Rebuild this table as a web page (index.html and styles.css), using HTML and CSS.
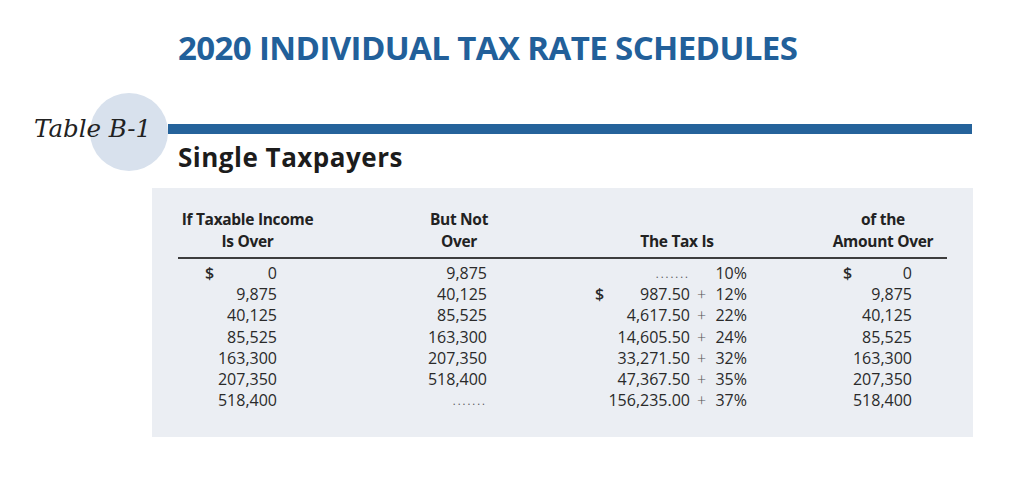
FILE: index.html
```html
<!DOCTYPE html>
<html lang="en">
<head>
    <meta charset="UTF-8">
    <meta name="viewport" content="width=device-width, initial-scale=1.0">
    <title>2020 Individual Tax Rate Schedules</title>
    <link rel="stylesheet" href="styles.css">
</head>
<body>
    <main class="page">
        <h1 class="title">2020 INDIVIDUAL TAX RATE SCHEDULES</h1>

        <div class="table-head">
            <span class="table-label">Table B-1</span>
            <div class="table-bar"></div>
        </div>

        <h2 class="subtitle">Single Taxpayers</h2>

        <section class="schedule">
            <div class="col col--income">
                <div class="col__head">If Taxable Income<br>Is Over</div>
                <div class="col__body">
                    <div class="cell"><span class="cur">$</span>0</div>
                    <div class="cell">9,875</div>
                    <div class="cell">40,125</div>
                    <div class="cell">85,525</div>
                    <div class="cell">163,300</div>
                    <div class="cell">207,350</div>
                    <div class="cell">518,400</div>
                </div>
            </div>

            <div class="col col--limit">
                <div class="col__head">But Not<br>Over</div>
                <div class="col__body">
                    <div class="cell">9,875</div>
                    <div class="cell">40,125</div>
                    <div class="cell">85,525</div>
                    <div class="cell">163,300</div>
                    <div class="cell">207,350</div>
                    <div class="cell">518,400</div>
                    <div class="cell"><span class="dots">.......</span></div>
                </div>
            </div>

            <div class="col col--tax">
                <div class="col__head"><br>The Tax Is</div>
                <div class="col__body">
                    <div class="cell"><span class="dots">.......</span><span class="plus"></span><span class="pct">10%</span></div>
                    <div class="cell"><span class="cur">$</span>987.50<span class="plus">+</span><span class="pct">12%</span></div>
                    <div class="cell">4,617.50<span class="plus">+</span><span class="pct">22%</span></div>
                    <div class="cell">14,605.50<span class="plus">+</span><span class="pct">24%</span></div>
                    <div class="cell">33,271.50<span class="plus">+</span><span class="pct">32%</span></div>
                    <div class="cell">47,367.50<span class="plus">+</span><span class="pct">35%</span></div>
                    <div class="cell">156,235.00<span class="plus">+</span><span class="pct">37%</span></div>
                </div>
            </div>

            <div class="col col--base">
                <div class="col__head">of the<br>Amount Over</div>
                <div class="col__body">
                    <div class="cell"><span class="cur">$</span>0</div>
                    <div class="cell">9,875</div>
                    <div class="cell">40,125</div>
                    <div class="cell">85,525</div>
                    <div class="cell">163,300</div>
                    <div class="cell">207,350</div>
                    <div class="cell">518,400</div>
                </div>
            </div>
        </section>
    </main>
</body>
</html>
```

FILE: styles.css
```css
body {
    margin: 0;
    background-color: #fff;
    font-family: "Open Sans", Arial, sans-serif;
    color: #222;
}
.page {
    width: 1024px;
    height: 491px;
}
.title {
    margin: 0;
    padding: 28px 0 0 178px;
    font-size: 33px;
    line-height: 40px;
    font-weight: 700;
    letter-spacing: -0.6px;
    color: #22609a;
}
.table-head {
    display: flex;
    align-items: flex-start;
    margin-top: 25px;
    padding-left: 34px;
}
.table-label {
    position: relative;
    z-index: 0;
    width: 134px;
    padding-top: 24px;
    line-height: 24px;
    font-family: "DejaVu Serif", serif;
    font-style: italic;
    font-size: 24.5px;
    color: #222;
}
.table-label::before {
    content: "";
    position: absolute;
    z-index: -1;
    left: 56px;
    top: 0;
    width: 78px;
    height: 78px;
    border-radius: 50%;
    background-color: #d8e1ed;
}
.table-bar {
    width: 804px;
    height: 10px;
    margin-top: 31px;
    background-color: #25639b;
}
.subtitle {
    margin: 1px 0 0;
    padding-left: 178px;
    font-size: 26px;
    line-height: 30px;
    font-weight: 700;
    letter-spacing: 0.5px;
    color: #1c1c1c;
}
.schedule {
    display: grid;
    grid-template-columns: 212px 205px 233px 119px;
    width: 769px;
    height: 229px;
    margin: 16px 0 0 152px;
    padding: 20px 26px 0;
    background-color: #ebeef3;
}
.col__head {
    padding-bottom: 5px;
    border-bottom: 2px solid #3d3d3d;
    font-size: 15.5px;
    line-height: 22px;
    font-weight: 700;
    letter-spacing: -0.3px;
    text-align: center;
    color: #222;
}
.col__body {
    padding-top: 4px;
    font-size: 16px;
    line-height: 21.2px;
    color: #2a2a2a;
}
.cell {
    display: flex;
    justify-content: flex-end;
    height: 21.2px;
}
.cur {
    margin-right: auto;
    font-weight: 600;
}
.dots {
    font-size: 11px;
    letter-spacing: 2px;
    color: #555;
}
.plus {
    width: 23px;
    text-align: center;
    font-weight: 300;
    color: #555;
}
.pct {
    width: 34px;
    text-align: right;
}
.col--income .col__head { padding-right: 73px; }
.col--income .col__body { padding: 4px 113px 0 27px; }
.col--limit .col__head { padding-right: 67px; }
.col--limit .col__body { padding-right: 108px; }
.col--tax .col__head { padding-right: 69px; }
.col--tax .col__body { padding-right: 81px; }
.col--base .col__head { padding-right: 9px; }
.col--base .col__body { padding: 4px 35px 0 15px; }
```
